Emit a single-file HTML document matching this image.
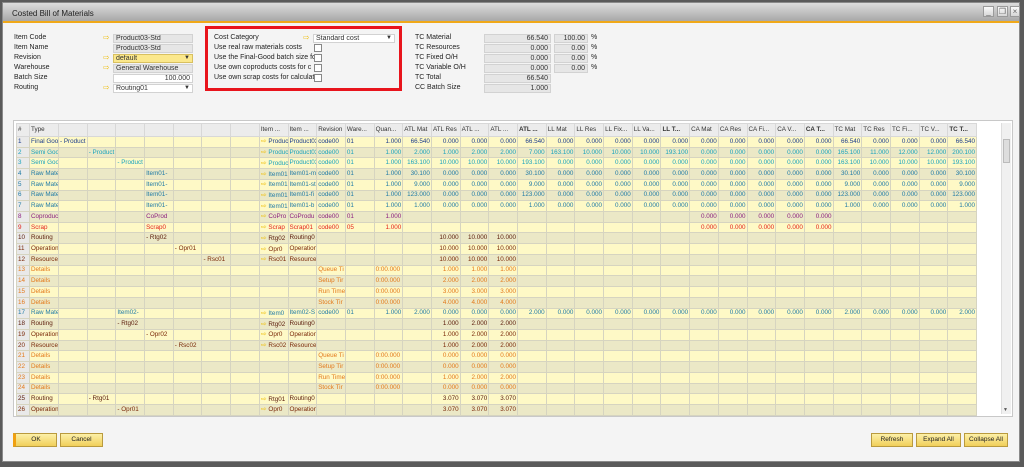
<!DOCTYPE html>
<html><head><meta charset="utf-8">
<style>
*{margin:0;padding:0;box-sizing:border-box}
body{width:1024px;height:467px;overflow:hidden;background:#5a5a5a;font-family:"Liberation Sans",sans-serif;font-size:7px;color:#333;position:relative}
.win{position:absolute;left:2px;top:2px;width:1018px;height:460px;background:#f4f4f4;border:1px solid #8a8a8a}
.title{position:absolute;left:0;top:0;width:100%;height:20px;background:linear-gradient(#dcdcdc,#a8a8a8);border-bottom:2px solid #f0a818;font-size:8px;color:#222;padding:6px 0 0 9px}
.wb{position:absolute;top:3px;width:11px;height:11px;background:linear-gradient(#fafafa,#d6d6d6);border:1px solid #9a9a9a;font-size:8px;line-height:9px;text-align:center;color:#666}
.lbl{position:absolute;font-size:7px;color:#222;white-space:nowrap}
.fld{position:absolute;height:9px;background:#e6e6e6;border:1px solid #d2d2d2;font-size:7px;line-height:7px;padding:0 2px;white-space:nowrap;overflow:hidden}
.arr{position:absolute;color:#efc21a;font-family:"DejaVu Sans",sans-serif;font-size:8px;line-height:8px}
.cb{position:absolute;width:8px;height:8px;background:#fff;border:1px solid #888}
.grid{position:absolute;left:10px;top:117px;width:1000px;height:297px;background:#fff;border:1px solid #c8c8c8;overflow:hidden}
table{position:absolute;left:2px;top:2px;border-collapse:collapse;table-layout:fixed;width:961px}
td,th{border:1px solid #d6d4c0;height:10.72px;font-size:6.3px;line-height:8px;padding:0 1px;white-space:nowrap;overflow:hidden;font-weight:normal;text-align:left}
th{height:13px;background:#ececec;border-color:#d8d8d8;color:#333;text-align:left}
th.b{font-weight:bold}
td.n{text-align:right}
tr.y td{background:#fef9c6}
tr.g td{background:#ebe8c6}
td:first-child{background:#e9e9e9!important;text-align:left}
.fg{color:#1c3d8c}.sg{color:#1aa3bd}.rm{color:#1f7aa6}.cp{color:#8c1f7f}.sc{color:#e4231a}.rt{color:#5a1a0a}.op{color:#7a2808}.dt{color:#e3791a}
.ar{color:#efc21a;font-family:"DejaVu Sans",sans-serif;font-size:7px}
.sb{position:absolute;left:987px;top:2px;width:10px;height:291px;background:#f0f0f0;border-left:1px solid #ddd}
.btn{position:absolute;top:430px;height:14px;background:linear-gradient(#fdf0a8,#f1cf5a);border:1px solid #b99a3e;font-size:6.5px;text-align:center;line-height:12px;color:#222}
</style></head><body>
<div class="win">
<div class="title">Costed Bill of Materials</div>
<div class="wb" style="left:980px">_</div><div class="wb" style="left:994px">&#10064;</div><div class="wb" style="left:1007px;width:10px">&#215;</div>

<div class="lbl" style="left:11px;top:31px">Item Code</div>
<div class="lbl" style="left:11px;top:41px">Item Name</div>
<div class="lbl" style="left:11px;top:51px">Revision</div>
<div class="lbl" style="left:11px;top:61px">Warehouse</div>
<div class="lbl" style="left:11px;top:71px">Batch Size</div>
<div class="lbl" style="left:11px;top:81px">Routing</div>
<div class="arr" style="left:100px;top:31px">&#8680;</div>
<div class="arr" style="left:100px;top:51px">&#8680;</div>
<div class="arr" style="left:100px;top:61px">&#8680;</div>
<div class="arr" style="left:100px;top:81px">&#8680;</div>
<div class="fld" style="left:110px;top:31px;width:80px">Product03-Std</div>
<div class="fld" style="left:110px;top:41px;width:80px">Product03-Std</div>
<div class="fld" style="left:110px;top:51px;width:80px;background:#fbe88c;border-color:#d8c060">default<span style="position:absolute;right:2px;font-size:6px">&#9660;</span></div>
<div class="fld" style="left:110px;top:61px;width:80px">General Warehouse</div>
<div class="fld" style="left:110px;top:71px;width:80px;background:#fff;text-align:right">100.000</div>
<div class="fld" style="left:110px;top:81px;width:80px;background:#fff">Routing01<span style="position:absolute;right:2px;font-size:6px">&#9660;</span></div>

<div style="position:absolute;left:202px;top:23px;width:197px;height:65px;border:3px solid #e8141c"></div>
<div class="lbl" style="left:211px;top:31px">Cost Category</div>
<div class="arr" style="left:300px;top:31px">&#8680;</div>
<div class="fld" style="left:310px;top:31px;width:82px;background:#fff">Standard cost<span style="position:absolute;right:2px;font-size:6px">&#9660;</span></div>
<div class="lbl" style="left:211px;top:41px">Use real raw materials costs</div>
<div class="lbl" style="left:211px;top:51px">Use the Final-Good batch size fc</div>
<div class="lbl" style="left:211px;top:61px">Use own coproducts costs for c</div>
<div class="lbl" style="left:211px;top:71px">Use own scrap costs for calculat</div>
<div class="cb" style="left:311px;top:41px"></div>
<div class="cb" style="left:311px;top:51px"></div>
<div class="cb" style="left:311px;top:61px"></div>
<div class="cb" style="left:311px;top:71px"></div>

<div class="lbl" style="left:412px;top:31px">TC Material</div>
<div class="lbl" style="left:412px;top:41px">TC Resources</div>
<div class="lbl" style="left:412px;top:51px">TC Fixed O/H</div>
<div class="lbl" style="left:412px;top:61px">TC Variable O/H</div>
<div class="lbl" style="left:412px;top:71px">TC Total</div>
<div class="lbl" style="left:412px;top:81px">CC Batch Size</div>
<div class="fld" style="left:481px;top:31px;width:67px;text-align:right">66.540</div>
<div class="fld" style="left:481px;top:41px;width:67px;text-align:right">0.000</div>
<div class="fld" style="left:481px;top:51px;width:67px;text-align:right">0.000</div>
<div class="fld" style="left:481px;top:61px;width:67px;text-align:right">0.000</div>
<div class="fld" style="left:481px;top:71px;width:67px;text-align:right">66.540</div>
<div class="fld" style="left:481px;top:81px;width:67px;text-align:right">1.000</div>
<div class="fld" style="left:551px;top:31px;width:34px;text-align:right">100.00</div>
<div class="fld" style="left:551px;top:41px;width:34px;text-align:right">0.00</div>
<div class="fld" style="left:551px;top:51px;width:34px;text-align:right">0.00</div>
<div class="fld" style="left:551px;top:61px;width:34px;text-align:right">0.00</div>
<div class="lbl" style="left:588px;top:31px">%</div>
<div class="lbl" style="left:588px;top:41px">%</div>
<div class="lbl" style="left:588px;top:51px">%</div>
<div class="lbl" style="left:588px;top:61px">%</div>

<div class="grid">
<table>
<colgroup><col style="width:13px"><col style="width:29px"><col span="32" style="width:28.7px"></colgroup>
<tr><th>#</th><th>Type</th><th></th><th></th><th></th><th></th><th></th><th></th><th></th><th>Item ...</th><th>Item ...</th><th>Revision</th><th>Ware...</th><th>Quan...</th><th>ATL Mat</th><th>ATL Res</th><th>ATL ...</th><th>ATL ...</th><th class="b">ATL ...</th><th>LL Mat</th><th>LL Res</th><th>LL Fix...</th><th>LL Va...</th><th class="b">LL T...</th><th>CA Mat</th><th>CA Res</th><th>CA Fi...</th><th>CA V...</th><th class="b">CA T...</th><th>TC Mat</th><th>TC Res</th><th>TC Fi...</th><th>TC V...</th><th class="b">TC T...</th></tr>
<tr class="y fg"><td>1</td><td>Final Good</td><td>- Product</td><td></td><td></td><td></td><td></td><td></td><td></td><td><span class="ar">&#8680;</span> Product</td><td>Product03</td><td>code00</td><td>01</td><td class="n">1.000</td><td class="n">66.540</td><td class="n">0.000</td><td class="n">0.000</td><td class="n">0.000</td><td class="n">66.540</td><td class="n">0.000</td><td class="n">0.000</td><td class="n">0.000</td><td class="n">0.000</td><td class="n">0.000</td><td class="n">0.000</td><td class="n">0.000</td><td class="n">0.000</td><td class="n">0.000</td><td class="n">0.000</td><td class="n">66.540</td><td class="n">0.000</td><td class="n">0.000</td><td class="n">0.000</td><td class="n">66.540</td></tr>
<tr class="g sg"><td>2</td><td>Semi Good</td><td></td><td>- Product</td><td></td><td></td><td></td><td></td><td></td><td><span class="ar">&#8680;</span> Product</td><td>Product03</td><td>code00</td><td>01</td><td class="n">1.000</td><td class="n">2.000</td><td class="n">1.000</td><td class="n">2.000</td><td class="n">2.000</td><td class="n">7.000</td><td class="n">163.100</td><td class="n">10.000</td><td class="n">10.000</td><td class="n">10.000</td><td class="n">193.100</td><td class="n">0.000</td><td class="n">0.000</td><td class="n">0.000</td><td class="n">0.000</td><td class="n">0.000</td><td class="n">165.100</td><td class="n">11.000</td><td class="n">12.000</td><td class="n">12.000</td><td class="n">200.100</td></tr>
<tr class="y sg"><td>3</td><td>Semi Good</td><td></td><td></td><td>- Product</td><td></td><td></td><td></td><td></td><td><span class="ar">&#8680;</span> Product</td><td>Product03</td><td>code00</td><td>01</td><td class="n">1.000</td><td class="n">163.100</td><td class="n">10.000</td><td class="n">10.000</td><td class="n">10.000</td><td class="n">193.100</td><td class="n">0.000</td><td class="n">0.000</td><td class="n">0.000</td><td class="n">0.000</td><td class="n">0.000</td><td class="n">0.000</td><td class="n">0.000</td><td class="n">0.000</td><td class="n">0.000</td><td class="n">0.000</td><td class="n">163.100</td><td class="n">10.000</td><td class="n">10.000</td><td class="n">10.000</td><td class="n">193.100</td></tr>
<tr class="g rm"><td>4</td><td>Raw Mate</td><td></td><td></td><td></td><td>Item01-</td><td></td><td></td><td></td><td><span class="ar">&#8680;</span> Item01</td><td>Item01-m</td><td>code00</td><td>01</td><td class="n">1.000</td><td class="n">30.100</td><td class="n">0.000</td><td class="n">0.000</td><td class="n">0.000</td><td class="n">30.100</td><td class="n">0.000</td><td class="n">0.000</td><td class="n">0.000</td><td class="n">0.000</td><td class="n">0.000</td><td class="n">0.000</td><td class="n">0.000</td><td class="n">0.000</td><td class="n">0.000</td><td class="n">0.000</td><td class="n">30.100</td><td class="n">0.000</td><td class="n">0.000</td><td class="n">0.000</td><td class="n">30.100</td></tr>
<tr class="y rm"><td>5</td><td>Raw Mate</td><td></td><td></td><td></td><td>Item01-</td><td></td><td></td><td></td><td><span class="ar">&#8680;</span> Item01</td><td>Item01-st</td><td>code00</td><td>01</td><td class="n">1.000</td><td class="n">9.000</td><td class="n">0.000</td><td class="n">0.000</td><td class="n">0.000</td><td class="n">9.000</td><td class="n">0.000</td><td class="n">0.000</td><td class="n">0.000</td><td class="n">0.000</td><td class="n">0.000</td><td class="n">0.000</td><td class="n">0.000</td><td class="n">0.000</td><td class="n">0.000</td><td class="n">0.000</td><td class="n">9.000</td><td class="n">0.000</td><td class="n">0.000</td><td class="n">0.000</td><td class="n">9.000</td></tr>
<tr class="g rm"><td>6</td><td>Raw Mate</td><td></td><td></td><td></td><td>Item01-</td><td></td><td></td><td></td><td><span class="ar">&#8680;</span> Item01</td><td>Item01-fi</td><td>code00</td><td>01</td><td class="n">1.000</td><td class="n">123.000</td><td class="n">0.000</td><td class="n">0.000</td><td class="n">0.000</td><td class="n">123.000</td><td class="n">0.000</td><td class="n">0.000</td><td class="n">0.000</td><td class="n">0.000</td><td class="n">0.000</td><td class="n">0.000</td><td class="n">0.000</td><td class="n">0.000</td><td class="n">0.000</td><td class="n">0.000</td><td class="n">123.000</td><td class="n">0.000</td><td class="n">0.000</td><td class="n">0.000</td><td class="n">123.000</td></tr>
<tr class="y rm"><td>7</td><td>Raw Mate</td><td></td><td></td><td></td><td>Item01-</td><td></td><td></td><td></td><td><span class="ar">&#8680;</span> Item01</td><td>Item01-b</td><td>code00</td><td>01</td><td class="n">1.000</td><td class="n">1.000</td><td class="n">0.000</td><td class="n">0.000</td><td class="n">0.000</td><td class="n">1.000</td><td class="n">0.000</td><td class="n">0.000</td><td class="n">0.000</td><td class="n">0.000</td><td class="n">0.000</td><td class="n">0.000</td><td class="n">0.000</td><td class="n">0.000</td><td class="n">0.000</td><td class="n">0.000</td><td class="n">1.000</td><td class="n">0.000</td><td class="n">0.000</td><td class="n">0.000</td><td class="n">1.000</td></tr>
<tr class="g cp"><td>8</td><td>Coproduct</td><td></td><td></td><td></td><td>CoProd</td><td></td><td></td><td></td><td><span class="ar">&#8680;</span> CoPro</td><td>CoProdu</td><td>code00</td><td>01</td><td class="n">1.000</td><td></td><td></td><td></td><td></td><td></td><td></td><td></td><td></td><td></td><td></td><td class="n">0.000</td><td class="n">0.000</td><td class="n">0.000</td><td class="n">0.000</td><td class="n">0.000</td><td></td><td></td><td></td><td></td><td></td></tr>
<tr class="y sc"><td>9</td><td>Scrap</td><td></td><td></td><td></td><td>Scrap0</td><td></td><td></td><td></td><td><span class="ar">&#8680;</span> Scrap</td><td>Scrap01</td><td>code00</td><td>05</td><td class="n">1.000</td><td></td><td></td><td></td><td></td><td></td><td></td><td></td><td></td><td></td><td></td><td class="n">0.000</td><td class="n">0.000</td><td class="n">0.000</td><td class="n">0.000</td><td class="n">0.000</td><td></td><td></td><td></td><td></td><td></td></tr>
<tr class="g rt"><td>10</td><td>Routing</td><td></td><td></td><td></td><td>- Rtg02</td><td></td><td></td><td></td><td><span class="ar">&#8680;</span> Rtg02</td><td>Routing0</td><td></td><td></td><td></td><td></td><td class="n">10.000</td><td class="n">10.000</td><td class="n">10.000</td><td></td><td></td><td></td><td></td><td></td><td></td><td></td><td></td><td></td><td></td><td></td><td></td><td></td><td></td><td></td><td></td></tr>
<tr class="y op"><td>11</td><td>Operation</td><td></td><td></td><td></td><td></td><td>- Opr01</td><td></td><td></td><td><span class="ar">&#8680;</span> Opr0</td><td>Operation</td><td></td><td></td><td></td><td></td><td class="n">10.000</td><td class="n">10.000</td><td class="n">10.000</td><td></td><td></td><td></td><td></td><td></td><td></td><td></td><td></td><td></td><td></td><td></td><td></td><td></td><td></td><td></td><td></td></tr>
<tr class="g op"><td>12</td><td>Resource</td><td></td><td></td><td></td><td></td><td></td><td>- Rsc01</td><td></td><td><span class="ar">&#8680;</span> Rsc01</td><td>Resource</td><td></td><td></td><td></td><td></td><td class="n">10.000</td><td class="n">10.000</td><td class="n">10.000</td><td></td><td></td><td></td><td></td><td></td><td></td><td></td><td></td><td></td><td></td><td></td><td></td><td></td><td></td><td></td><td></td></tr>
<tr class="y dt"><td>13</td><td>Details</td><td></td><td></td><td></td><td></td><td></td><td></td><td></td><td></td><td></td><td>Queue Ti</td><td></td><td>0:00.000</td><td></td><td class="n">1.000</td><td class="n">1.000</td><td class="n">1.000</td><td></td><td></td><td></td><td></td><td></td><td></td><td></td><td></td><td></td><td></td><td></td><td></td><td></td><td></td><td></td><td></td></tr>
<tr class="g dt"><td>14</td><td>Details</td><td></td><td></td><td></td><td></td><td></td><td></td><td></td><td></td><td></td><td>Setup Tir</td><td></td><td>0:00.000</td><td></td><td class="n">2.000</td><td class="n">2.000</td><td class="n">2.000</td><td></td><td></td><td></td><td></td><td></td><td></td><td></td><td></td><td></td><td></td><td></td><td></td><td></td><td></td><td></td><td></td></tr>
<tr class="y dt"><td>15</td><td>Details</td><td></td><td></td><td></td><td></td><td></td><td></td><td></td><td></td><td></td><td>Run Time</td><td></td><td>0:00.000</td><td></td><td class="n">3.000</td><td class="n">3.000</td><td class="n">3.000</td><td></td><td></td><td></td><td></td><td></td><td></td><td></td><td></td><td></td><td></td><td></td><td></td><td></td><td></td><td></td><td></td></tr>
<tr class="g dt"><td>16</td><td>Details</td><td></td><td></td><td></td><td></td><td></td><td></td><td></td><td></td><td></td><td>Stock Tir</td><td></td><td>0:00.000</td><td></td><td class="n">4.000</td><td class="n">4.000</td><td class="n">4.000</td><td></td><td></td><td></td><td></td><td></td><td></td><td></td><td></td><td></td><td></td><td></td><td></td><td></td><td></td><td></td><td></td></tr>
<tr class="y rm"><td>17</td><td>Raw Mate</td><td></td><td></td><td>Item02-</td><td></td><td></td><td></td><td></td><td><span class="ar">&#8680;</span> Item0</td><td>Item02-S</td><td>code00</td><td>01</td><td class="n">1.000</td><td class="n">2.000</td><td class="n">0.000</td><td class="n">0.000</td><td class="n">0.000</td><td class="n">2.000</td><td class="n">0.000</td><td class="n">0.000</td><td class="n">0.000</td><td class="n">0.000</td><td class="n">0.000</td><td class="n">0.000</td><td class="n">0.000</td><td class="n">0.000</td><td class="n">0.000</td><td class="n">0.000</td><td class="n">2.000</td><td class="n">0.000</td><td class="n">0.000</td><td class="n">0.000</td><td class="n">2.000</td></tr>
<tr class="g rt"><td>18</td><td>Routing</td><td></td><td></td><td>- Rtg02</td><td></td><td></td><td></td><td></td><td><span class="ar">&#8680;</span> Rtg02</td><td>Routing0</td><td></td><td></td><td></td><td></td><td class="n">1.000</td><td class="n">2.000</td><td class="n">2.000</td><td></td><td></td><td></td><td></td><td></td><td></td><td></td><td></td><td></td><td></td><td></td><td></td><td></td><td></td><td></td><td></td></tr>
<tr class="y op"><td>19</td><td>Operation</td><td></td><td></td><td></td><td>- Opr02</td><td></td><td></td><td></td><td><span class="ar">&#8680;</span> Opr0</td><td>Operation</td><td></td><td></td><td></td><td></td><td class="n">1.000</td><td class="n">2.000</td><td class="n">2.000</td><td></td><td></td><td></td><td></td><td></td><td></td><td></td><td></td><td></td><td></td><td></td><td></td><td></td><td></td><td></td><td></td></tr>
<tr class="g op"><td>20</td><td>Resource</td><td></td><td></td><td></td><td></td><td>- Rsc02</td><td></td><td></td><td><span class="ar">&#8680;</span> Rsc02</td><td>Resource</td><td></td><td></td><td></td><td></td><td class="n">1.000</td><td class="n">2.000</td><td class="n">2.000</td><td></td><td></td><td></td><td></td><td></td><td></td><td></td><td></td><td></td><td></td><td></td><td></td><td></td><td></td><td></td><td></td></tr>
<tr class="y dt"><td>21</td><td>Details</td><td></td><td></td><td></td><td></td><td></td><td></td><td></td><td></td><td></td><td>Queue Ti</td><td></td><td>0:00.000</td><td></td><td class="n">0.000</td><td class="n">0.000</td><td class="n">0.000</td><td></td><td></td><td></td><td></td><td></td><td></td><td></td><td></td><td></td><td></td><td></td><td></td><td></td><td></td><td></td><td></td></tr>
<tr class="g dt"><td>22</td><td>Details</td><td></td><td></td><td></td><td></td><td></td><td></td><td></td><td></td><td></td><td>Setup Tir</td><td></td><td>0:00.000</td><td></td><td class="n">0.000</td><td class="n">0.000</td><td class="n">0.000</td><td></td><td></td><td></td><td></td><td></td><td></td><td></td><td></td><td></td><td></td><td></td><td></td><td></td><td></td><td></td><td></td></tr>
<tr class="y dt"><td>23</td><td>Details</td><td></td><td></td><td></td><td></td><td></td><td></td><td></td><td></td><td></td><td>Run Time</td><td></td><td>0:00.000</td><td></td><td class="n">1.000</td><td class="n">2.000</td><td class="n">2.000</td><td></td><td></td><td></td><td></td><td></td><td></td><td></td><td></td><td></td><td></td><td></td><td></td><td></td><td></td><td></td><td></td></tr>
<tr class="g dt"><td>24</td><td>Details</td><td></td><td></td><td></td><td></td><td></td><td></td><td></td><td></td><td></td><td>Stock Tir</td><td></td><td>0:00.000</td><td></td><td class="n">0.000</td><td class="n">0.000</td><td class="n">0.000</td><td></td><td></td><td></td><td></td><td></td><td></td><td></td><td></td><td></td><td></td><td></td><td></td><td></td><td></td><td></td><td></td></tr>
<tr class="y rt"><td>25</td><td>Routing</td><td></td><td>- Rtg01</td><td></td><td></td><td></td><td></td><td></td><td><span class="ar">&#8680;</span> Rtg01</td><td>Routing0</td><td></td><td></td><td></td><td></td><td class="n">3.070</td><td class="n">3.070</td><td class="n">3.070</td><td></td><td></td><td></td><td></td><td></td><td></td><td></td><td></td><td></td><td></td><td></td><td></td><td></td><td></td><td></td><td></td></tr>
<tr class="g op"><td>26</td><td>Operation</td><td></td><td></td><td>- Opr01</td><td></td><td></td><td></td><td></td><td><span class="ar">&#8680;</span> Opr0</td><td>Operation</td><td></td><td></td><td></td><td></td><td class="n">3.070</td><td class="n">3.070</td><td class="n">3.070</td><td></td><td></td><td></td><td></td><td></td><td></td><td></td><td></td><td></td><td></td><td></td><td></td><td></td><td></td><td></td><td></td></tr>
</table>
<div class="sb"><div style="position:absolute;left:1px;top:16px;width:7px;height:24px;background:#ddd;border:1px solid #bbb"></div><div style="position:absolute;bottom:1px;left:1px;font-size:5px;color:#555">&#9660;</div></div>
</div>

<div class="btn" style="left:10px;width:44px;border-left:3px solid #f0a010">OK</div>
<div class="btn" style="left:57px;width:43px">Cancel</div>
<div class="btn" style="left:868px;width:42px">Refresh</div>
<div class="btn" style="left:913px;width:45px">Expand All</div>
<div class="btn" style="left:961px;width:44px">Collapse All</div>
</div>
</body></html>
